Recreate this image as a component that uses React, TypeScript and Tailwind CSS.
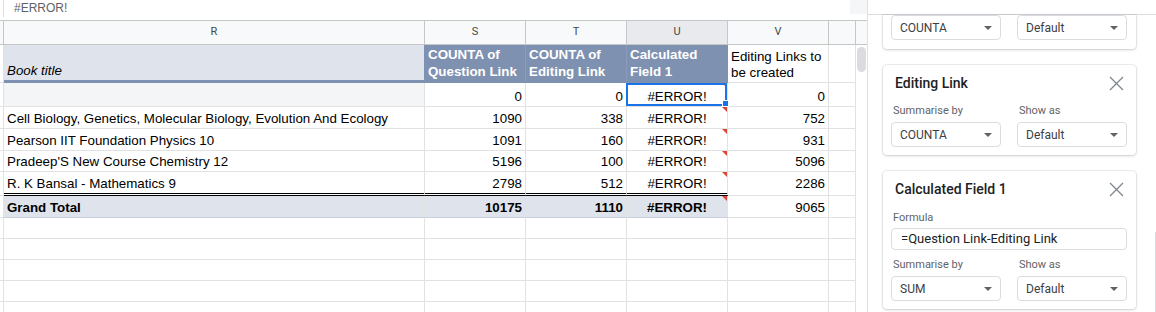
import type { ReactNode } from "react";

const sheetFont = "[font-family:'Liberation_Sans',Arial,sans-serif]";
const panelFont = "[font-family:Roboto,'Noto_Sans',sans-serif]";

function Tri() {
  return (
    <span className="absolute right-0 top-0 h-0 w-0 border-l-[5px] border-t-[5px] border-l-transparent border-t-[#db4437]" />
  );
}

function Chevron() {
  return (
    <svg width="8" height="4" viewBox="0 0 8 4">
      <path d="M0 0h8L4 4z" fill="#5f6368" />
    </svg>
  );
}

function Select({ value }: { value: string }) {
  return (
    <div className="flex h-[25px] w-[110px] items-center justify-between rounded-[4px] border border-[#dadce0] px-[8px] text-[12px] text-[#3c4043]">
      <span>{value}</span>
      <Chevron />
    </div>
  );
}

function Labels() {
  return (
    <div className="flex gap-[16px] text-[11px] leading-[14px] text-[#5f6368]">
      <div className="w-[110px] pl-[2px]">Summarise by</div>
      <div className="w-[110px] pl-[2px]">Show as</div>
    </div>
  );
}

function Close() {
  return (
    <svg width="15" height="15" viewBox="0 0 15 15">
      <path d="M1 1l13 13M14 1L1 14" stroke="#80868b" strokeWidth="1.3" />
    </svg>
  );
}

function Card({ children, className = "" }: { children: ReactNode; className?: string }) {
  return (
    <div
      className={`w-[253px] bg-white pl-[8px] pr-[9px] shadow-[0_0_0_1px_rgba(60,64,67,0.08),0_1px_3px_rgba(60,64,67,0.2)] ${className}`}
    >
      {children}
    </div>
  );
}

function Title({ text }: { text: string }) {
  return (
    <div className="flex h-[18px] items-center justify-between pl-[4px] pr-[3px]">
      <span className="text-[14px] font-medium leading-[18px] text-[#202124]">{text}</span>
      <Close />
    </div>
  );
}

const dataRows = [
  { h: "h-[22px]", title: "Cell Biology, Genetics, Molecular Biology, Evolution And Ecology", q: "1090", e: "338", v: "752" },
  { h: "h-[22px]", title: "Pearson IIT Foundation Physics 10", q: "1091", e: "160", v: "931" },
  { h: "h-[21px]", title: "Pradeep'S New Course Chemistry 12", q: "5196", e: "100", v: "5096" },
];

export default function App() {
  return (
    <div className="flex h-[312px] w-[1156px] overflow-hidden bg-white">
      {/* sheet */}
      <div className={`w-[867px] shrink-0 text-[13.333px] text-black ${sheetFont}`}>
        <div className="flex h-[21px] border-b border-b-[#c4c7c5]">
          <div className="h-[17px] w-[4px] border-r border-r-[#e0e0e0]" />
          <div className="flex-1 pl-[10px] text-[12px] leading-[16px] text-[#5f6368]">#ERROR!</div>
          <div className="h-[14px] w-[17px] bg-[#f5f6f7]" />
        </div>

        <div className="flex">
          <div className="w-[856px] shrink-0">
            {/* column letters */}
            <div className="flex h-[24px] border-b border-b-[#c4c7c5] bg-[#f8f9fa] text-[11px] text-[#444746] [font-family:Roboto,sans-serif]">
              <div className="w-[4px] shrink-0 border-r border-r-[#c4c7c5]" />
              <div className="flex w-[421px] shrink-0 items-center justify-center border-r border-r-[#c4c7c5]">R</div>
              <div className="flex w-[101px] shrink-0 items-center justify-center border-r border-r-[#c4c7c5]">S</div>
              <div className="flex w-[101px] shrink-0 items-center justify-center border-r border-r-[#c4c7c5]">T</div>
              <div className="flex w-[101px] shrink-0 items-center justify-center border-r border-r-[#c4c7c5] bg-[#e8eaed]">U</div>
              <div className="flex w-[101px] shrink-0 items-center justify-center border-r border-r-[#c4c7c5]">V</div>
              <div className="w-[27px] shrink-0 border-r border-r-[#c4c7c5]" />
            </div>

            {/* pivot header */}
            <div className="flex h-[38px]">
              <div className="w-[4px] shrink-0 border-r border-b border-r-[#e2e2e3] border-b-[#e2e2e3]" />
              <div className="flex w-[421px] shrink-0 items-end border-r border-b-[3px] border-r-[#7f91b1] border-b-[#7f91b1] bg-[#dfe3eb] pb-[1px] pl-[3px] italic leading-[16px]">
                Book title
              </div>
              <div className="flex w-[101px] shrink-0 items-end border-r border-b-[3px] border-r-[#8c9dbb] border-b-[#7f91b1] bg-[#7f91b1] pl-[3px] font-bold leading-[17px] text-white">
                COUNTA of Question Link
              </div>
              <div className="flex w-[101px] shrink-0 items-end border-r border-b-[3px] border-r-[#8c9dbb] border-b-[#7f91b1] bg-[#7f91b1] pl-[3px] font-bold leading-[17px] text-white">
                COUNTA of Editing Link
              </div>
              <div className="flex w-[101px] shrink-0 items-end border-r border-b-[3px] border-r-[#7f91b1] border-b-[#7f91b1] bg-[#7f91b1] pl-[3px] font-bold leading-[17px] text-white">
                Calculated Field 1
              </div>
              <div className="flex w-[101px] shrink-0 items-end border-r border-b border-r-[#e2e2e3] border-b-[#e2e2e3] pb-[1px] pl-[3px] leading-[16px]">
                Editing Links to be created
              </div>
              <div className="w-[27px] shrink-0 border-r border-b border-r-[#e2e2e3] border-b-[#e2e2e3]" />
            </div>

            {/* blank pivot row */}
            <div className="flex h-[24px] leading-[16px]">
              <div className="w-[4px] shrink-0 border-r border-b border-r-[#e2e2e3] border-b-[#e2e2e3]" />
              <div className="w-[421px] shrink-0 border-r border-b border-r-[#e2e2e3] border-b-[#e2e2e3] bg-[#f4f5f7]" />
              <div className="flex w-[101px] shrink-0 items-end justify-end border-r border-b border-r-[#e2e2e3] border-b-[#e2e2e3] pb-[1px] pr-[3px]">0</div>
              <div className="flex w-[101px] shrink-0 items-end justify-end border-r border-b border-r-[#e2e2e3] border-b-[#e2e2e3] pb-[1px] pr-[3px]">0</div>
              <div className="relative flex w-[101px] shrink-0 items-end justify-center border-r border-b border-r-[#e2e2e3] border-b-[#e2e2e3] pb-[1px]">
                #ERROR!
                <Tri />
                <span className="absolute -left-[1px] top-0 right-0 bottom-0 z-10 border-2 border-[#1a73e8]" />
                <span className="absolute right-[-2px] bottom-[-1px] z-20 h-[7px] w-[7px] border border-white bg-[#1a73e8]" />
              </div>
              <div className="flex w-[101px] shrink-0 items-end justify-end border-r border-b border-r-[#e2e2e3] border-b-[#e2e2e3] pb-[1px] pr-[3px]">0</div>
              <div className="w-[27px] shrink-0 border-r border-b border-r-[#e2e2e3] border-b-[#e2e2e3]" />
            </div>

            {dataRows.map((r) => (
              <div key={r.title} className={`flex leading-[16px] ${r.h}`}>
                <div className="w-[4px] shrink-0 border-r border-b border-r-[#e2e2e3] border-b-[#e2e2e3]" />
                <div className="flex w-[421px] shrink-0 items-end border-r border-b border-r-[#e2e2e3] border-b-[#e2e2e3] pb-[1px] pl-[3px]">{r.title}</div>
                <div className="flex w-[101px] shrink-0 items-end justify-end border-r border-b border-r-[#e2e2e3] border-b-[#e2e2e3] pb-[1px] pr-[3px]">{r.q}</div>
                <div className="flex w-[101px] shrink-0 items-end justify-end border-r border-b border-r-[#e2e2e3] border-b-[#e2e2e3] pb-[1px] pr-[3px]">{r.e}</div>
                <div className="relative flex w-[101px] shrink-0 items-end justify-center border-r border-b border-r-[#e2e2e3] border-b-[#e2e2e3] pb-[1px]">
                  #ERROR!
                  <Tri />
                </div>
                <div className="flex w-[101px] shrink-0 items-end justify-end border-r border-b border-r-[#e2e2e3] border-b-[#e2e2e3] pb-[1px] pr-[3px]">{r.v}</div>
                <div className="w-[27px] shrink-0 border-r border-b border-r-[#e2e2e3] border-b-[#e2e2e3]" />
              </div>
            ))}

            {/* last row, double rule below */}
            <div className="flex h-[24px] leading-[16px]">
              <div className="w-[4px] shrink-0 border-r border-b border-r-[#e2e2e3] border-b-[#e2e2e3]" />
              <div className="flex w-[421px] shrink-0 items-end border-r border-b-[3px] border-double border-r-[#e2e2e3] border-b-black pb-[1px] pl-[3px]">R. K Bansal - Mathematics 9</div>
              <div className="flex w-[101px] shrink-0 items-end justify-end border-r border-b-[3px] border-double border-r-[#e2e2e3] border-b-black pb-[1px] pr-[3px]">2798</div>
              <div className="flex w-[101px] shrink-0 items-end justify-end border-r border-b-[3px] border-double border-r-[#e2e2e3] border-b-black pb-[1px] pr-[3px]">512</div>
              <div className="relative flex w-[101px] shrink-0 items-end justify-center border-r border-b-[3px] border-double border-r-[#e2e2e3] border-b-black pb-[1px]">
                #ERROR!
                <Tri />
              </div>
              <div className="flex w-[101px] shrink-0 items-end justify-end border-r border-b border-r-[#e2e2e3] border-b-[#e2e2e3] pb-[3px] pr-[3px]">2286</div>
              <div className="w-[27px] shrink-0 border-r border-b border-r-[#e2e2e3] border-b-[#e2e2e3]" />
            </div>

            {/* grand total */}
            <div className="flex h-[22px] leading-[16px]">
              <div className="w-[4px] shrink-0 border-r border-b border-r-[#e2e2e3] border-b-[#e2e2e3]" />
              <div className="flex w-[421px] shrink-0 items-end border-r border-b border-r-[#e2e2e3] border-b-[#c9cfda] bg-[#dfe3eb] pb-[1px] pl-[3px] font-bold">Grand Total</div>
              <div className="flex w-[101px] shrink-0 items-end justify-end border-r border-b border-r-[#e2e2e3] border-b-[#c9cfda] bg-[#dfe3eb] pb-[1px] pr-[3px] font-bold">10175</div>
              <div className="flex w-[101px] shrink-0 items-end justify-end border-r border-b border-r-[#e2e2e3] border-b-[#c9cfda] bg-[#dfe3eb] pb-[1px] pr-[3px] font-bold">1110</div>
              <div className="relative flex w-[101px] shrink-0 items-end justify-center border-r border-b border-r-[#e2e2e3] border-b-[#c9cfda] bg-[#dfe3eb] pb-[1px] font-bold">
                #ERROR!
                <Tri />
              </div>
              <div className="flex w-[101px] shrink-0 items-end justify-end border-r border-b border-r-[#e2e2e3] border-b-[#e2e2e3] pb-[1px] pr-[3px]">9065</div>
              <div className="w-[27px] shrink-0 border-r border-b border-r-[#e2e2e3] border-b-[#e2e2e3]" />
            </div>

            {[0, 1, 2, 3, 4].map((i) => (
              <div key={i} className="flex h-[21px]">
                <div className="w-[4px] shrink-0 border-r border-b border-r-[#e2e2e3] border-b-[#e2e2e3]" />
                <div className="w-[421px] shrink-0 border-r border-b border-r-[#e2e2e3] border-b-[#e2e2e3]" />
                <div className="w-[101px] shrink-0 border-r border-b border-r-[#e2e2e3] border-b-[#e2e2e3]" />
                <div className="w-[101px] shrink-0 border-r border-b border-r-[#e2e2e3] border-b-[#e2e2e3]" />
                <div className="w-[101px] shrink-0 border-r border-b border-r-[#e2e2e3] border-b-[#e2e2e3]" />
                <div className="w-[101px] shrink-0 border-r border-b border-r-[#e2e2e3] border-b-[#e2e2e3]" />
                <div className="w-[27px] shrink-0 border-r border-b border-r-[#e2e2e3] border-b-[#e2e2e3]" />
              </div>
            ))}
          </div>

          {/* vertical scrollbar */}
          <div className="w-[11px] shrink-0">
            <div className="h-[24px] border-b border-b-[#c4c7c5] bg-[#f8f9fa]" />
            <div className="ml-[1px] mt-[2px] h-[25px] w-[9px] rounded-full bg-[#dadce0]" />
          </div>
        </div>
      </div>

      {/* pivot editor panel */}
      <div className={`relative w-[289px] shrink-0 border-l border-l-[#e0e0e0] ${panelFont}`}>
        <div className="h-[15px] border-b border-b-[#dadce0]" />
        <div className="pl-[15px]">
          <Card className="rounded-b-[4px] pb-[9px]">
            <div className="flex gap-[16px]">
              <Select value="COUNTA" />
              <Select value="Default" />
            </div>
          </Card>

          <Card className="mt-[16px] rounded-[4px] pt-[9px] pb-[8px]">
            <Title text="Editing Link" />
            <div className="mt-[12px]">
              <Labels />
            </div>
            <div className="mt-[4px] flex gap-[16px]">
              <Select value="COUNTA" />
              <Select value="Default" />
            </div>
          </Card>

          <Card className="mt-[16px] rounded-[4px] pt-[9px] pb-[8px]">
            <Title text="Calculated Field 1" />
            <div className="mt-[13px] pl-[2px] text-[11px] leading-[14px] text-[#5f6368]">Formula</div>
            <div className="mt-[3px] flex h-[22px] w-[236px] items-center rounded-[4px] border border-[#dadce0] pl-[9px] text-[13px] text-[#202124]">
              =Question Link-Editing Link
            </div>
            <div className="mt-[8px]">
              <Labels />
            </div>
            <div className="mt-[4px] flex gap-[16px]">
              <Select value="SUM" />
              <Select value="Default" />
            </div>
          </Card>
        </div>
        <div className="absolute right-0 top-[232px] bottom-0 w-px bg-[#dadce0]" />
      </div>
    </div>
  );
}
